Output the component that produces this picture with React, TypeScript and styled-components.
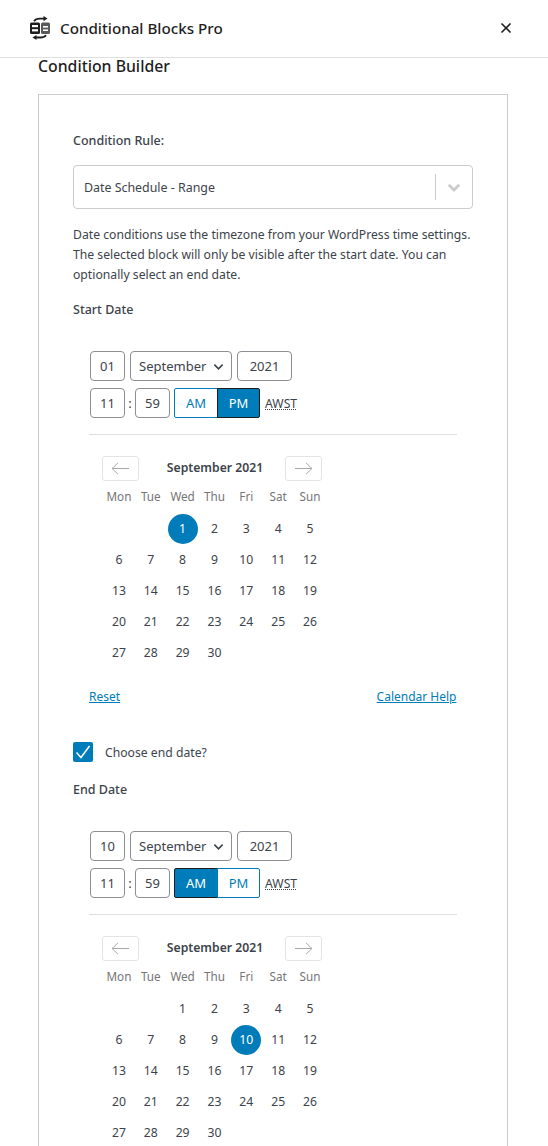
import React from "react";
import styled, { createGlobalStyle } from "styled-components";

const Global = createGlobalStyle`
  html, body { margin: 0; padding: 0; background: #fff; height: 1146px; overflow: hidden; }
  body { font-family: "Noto Sans", "Open Sans", sans-serif; font-size: 13px; color: #1e1e1e; }
  * { box-sizing: border-box; }
`;

const Page = styled.div`
  width: 548px;
  height: 1146px;
  overflow: hidden;
  display: flex;
  flex-direction: column;
`;
const Header = styled.header`
  height: 58px;
  flex: none;
  border-bottom: 1px solid #e0e0e0;
  display: flex;
  align-items: center;
  padding: 0 36px 2px 29px;
  gap: 9px;
`;
const HeaderTitle = styled.h1`
  margin: 0;
  flex: 1;
  font-size: 15.2px;
  line-height: 20px;
  font-weight: 500;
  color: #1e1e1e;
`;
const CloseButton = styled.button`
  border: 0;
  background: none;
  padding: 0;
  width: 12px;
  height: 12px;
  display: flex;
  color: #1e1e1e;
`;
const Body = styled.main`
  padding: 0 40px 0 38px;
`;
const SectionTitle = styled.h2`
  margin: 0;
  height: 36px;
  font-size: 15.8px;
  line-height: 16px;
  font-weight: 500;
  color: #1e1e1e;
`;
const Panel = styled.section`
  border: 1px solid #ccc;
  padding: 37px 34px 60px;
`;
const FieldLabel = styled.div`
  font-size: 12.5px;
  line-height: 18px;
  font-weight: 500;
  color: #3c434a;
`;
const RuleSelect = styled.div`
  margin-top: 15px;
  height: 44px;
  border: 1px solid #ccc;
  border-radius: 4px;
  display: flex;
  align-items: center;
  padding-left: 10px;
  font-size: 12.4px;
  color: #3c434a;
`;
const RuleValue = styled.span`
  flex: 1;
`;
const RuleSeparator = styled.span`
  width: 1px;
  height: 26px;
  background: #ccc;
`;
const RuleChevron = styled.span`
  width: 36px;
  display: flex;
  justify-content: center;
  color: #ccc;
`;
const Description = styled.p`
  margin: 16px 0 0;
  font-size: 12.2px;
  line-height: 20px;
  color: #3c434a;
  white-space: nowrap;
`;
const DateHeading = styled(FieldLabel)<{ $top: number }>`
  margin-top: ${(p) => p.$top}px;
`;
const Picker = styled.div`
  margin-top: 32px;
  padding-left: 17px;
  width: 385px;
`;
const TimeRow = styled.div`
  display: flex;
  align-items: center;
  gap: 5px;
  height: 30px;
  margin-bottom: 7px;
`;
const Input = styled.div<{ $w: number }>`
  width: ${(p) => p.$w}px;
  height: 30px;
  border: 1px solid #8c8f94;
  border-radius: 4px;
  display: flex;
  align-items: center;
  justify-content: center;
  font-size: 13px;
  color: #3c434a;
  flex: none;
`;
const MonthSelect = styled(Input)`
  justify-content: space-between;
  padding: 0 7px 0 8px;
`;
const Colon = styled.span`
  width: 5px;
  text-align: center;
  color: #3c434a;
  margin: 0 -2.5px;
`;
const Meridiem = styled.div`
  display: flex;
  height: 30px;
  flex: none;
  margin-left: -1px;
`;
const MeridiemButton = styled.div<{ $on: boolean; $side: "l" | "r" }>`
  width: ${(p) => (p.$side === "l" ? 44 : 43)}px;
  height: 30px;
  display: flex;
  align-items: center;
  justify-content: center;
  font-size: 13px;
  border: 1px solid ${(p) => (p.$on ? "#1e1e1e" : "#007cba")};
  background: ${(p) => (p.$on ? "#007cba" : "#fff")};
  color: ${(p) => (p.$on ? "#fff" : "#007cba")};
  border-radius: ${(p) => (p.$side === "l" ? "2px 0 0 2px" : "0 2px 2px 0")};
  ${(p) => (p.$side === "r" ? "margin-left: -1px;" : "")}
`;
const Zone = styled.abbr`
  font-size: 12.2px;
  color: #3c434a;
  text-decoration: underline dotted;
`;
const Divider = styled.hr`
  margin: 16px 0 0 -1px;
  border: 0;
  border-top: 1px solid #ddd;
  width: 368px;
  height: 1px;
`;
const Calendar = styled.div`
  margin-top: 21px;
  margin-left: 12px;
  width: 220px;
`;
const CalNav = styled.div`
  display: flex;
  align-items: center;
  justify-content: space-between;
  height: 25px;
`;
const NavButton = styled.div`
  width: 37px;
  height: 25px;
  border: 1px solid #e4e4e4;
  border-radius: 3px;
  display: flex;
  align-items: center;
  justify-content: center;
  color: #a8a8a8;
`;
const Month = styled.strong`
  font-size: 12.2px;
  font-weight: 600;
  color: #3c434a;
  padding: 0 0 3px 6px;
`;
const Grid = styled.div`
  display: grid;
  grid-template-columns: repeat(7, 31.85px);
  margin-left: 1px;
`;
const WeekGrid = styled(Grid)`
  margin-top: 6px;
  height: 18px;
  margin-bottom: 8px;
`;
const Week = styled.div`
  font-size: 11.7px;
  line-height: 18px;
  text-align: center;
  color: #757575;
`;
const Day = styled.div`
  height: 31px;
  display: flex;
  align-items: center;
  justify-content: center;
  font-size: 12.2px;
  color: #3c434a;
`;
const DayMark = styled.span<{ $on?: boolean }>`
  width: 30px;
  height: 30px;
  border-radius: 50%;
  display: flex;
  align-items: center;
  justify-content: center;
  background: ${(p) => (p.$on ? "#007cba" : "transparent")};
  color: ${(p) => (p.$on ? "#fff" : "inherit")};
`;
const Links = styled.div`
  margin-top: 20px;
  padding-left: 16px;
  display: flex;
  justify-content: space-between;
  width: 383.5px;
`;
const LinkText = styled.a`
  font-size: 12px;
  line-height: 18px;
  color: #007cba;
  text-decoration: underline;
`;
const CheckRow = styled.label`
  display: flex;
  align-items: center;
  gap: 12px;
  margin-top: 36px;
  height: 20px;
  font-size: 12.2px;
  color: #3c434a;
`;
const CheckBox = styled.span`
  width: 20px;
  height: 20px;
  background: #007cba;
  border-radius: 2px;
  display: flex;
  align-items: center;
  justify-content: center;
  flex: none;
`;

const Logo = () => (
  <svg width="22" height="24" viewBox="0 0 22 24" fill="none" style={{ flex: "none" }}>
    <path d="M5 5.2C6.5 3 8.5 2.6 10.5 2.6H15" stroke="#1e1e1e" strokeWidth="1.8" />
    <path d="M14.5 0l4 2.6-4 2.6z" fill="#1e1e1e" />
    <rect x="1" y="6.5" width="10" height="11.5" rx="1.5" fill="#1e1e1e" />
    <rect x="12" y="6.5" width="9" height="11.5" rx="1.5" fill="#5a5a5a" />
    <rect x="3" y="9" width="6" height="2.2" fill="#fff" />
    <rect x="3" y="13.2" width="6" height="2.2" fill="#fff" />
    <rect x="14" y="10" width="5" height="1.6" fill="#fff" />
    <rect x="14" y="13.4" width="5" height="1.6" fill="#fff" />
    <path d="M17 19.2C15.5 21.2 13.5 21.5 11.5 21.5H7" stroke="#1e1e1e" strokeWidth="1.8" />
    <path d="M7.5 18.9l-4 2.6 4 2.5z" fill="#1e1e1e" />
  </svg>
);

const Close = () => (
  <svg width="12" height="12" viewBox="0 0 12 12" fill="none">
    <path d="M1.5 1.5l9 9M10.5 1.5l-9 9" stroke="currentColor" strokeWidth="1.6" />
  </svg>
);

const Chevron = ({ size = 12, stroke = 2 }: { size?: number; stroke?: number }) => (
  <svg width={size} height={size} viewBox="0 0 12 12" fill="none">
    <path d="M1.5 4l4.5 4.5L10.5 4" stroke="currentColor" strokeWidth={stroke} />
  </svg>
);

const Arrow = ({ dir }: { dir: "l" | "r" }) => (
  <svg width="19" height="13" viewBox="0 0 19 13" fill="none">
    {dir === "l" ? (
      <path d="M18 6.5H1M7 .8L1 6.5l6 5.7" stroke="currentColor" />
    ) : (
      <path d="M1 6.5h17M12 .8l6 5.7-6 5.7" stroke="currentColor" />
    )}
  </svg>
);

const weekdays = ["Mon", "Tue", "Wed", "Thu", "Fri", "Sat", "Sun"];

const DatePicker = ({ day, selected, pm }: { day: string; selected: number; pm: boolean }) => (
  <Picker>
    <TimeRow>
      <Input $w={35}>{day}</Input>
      <MonthSelect $w={102}>
        September
        <Chevron size={11} stroke={1.8} />
      </MonthSelect>
      <Input $w={55}>2021</Input>
    </TimeRow>
    <TimeRow>
      <Input $w={35}>11</Input>
      <Colon>:</Colon>
      <Input $w={35}>59</Input>
      <Meridiem>
        <MeridiemButton $side="l" $on={!pm}>AM</MeridiemButton>
        <MeridiemButton $side="r" $on={pm}>PM</MeridiemButton>
      </Meridiem>
      <Zone title="Australian Western Standard Time">AWST</Zone>
    </TimeRow>
    <Divider />
    <Calendar>
      <CalNav>
        <NavButton><Arrow dir="l" /></NavButton>
        <Month>September 2021</Month>
        <NavButton><Arrow dir="r" /></NavButton>
      </CalNav>
      <WeekGrid>
        {weekdays.map((w) => <Week key={w}>{w}</Week>)}
      </WeekGrid>
      <Grid>
        <Day /><Day />
        {Array.from({ length: 30 }, (_, i) => i + 1).map((d) => (
          <Day key={d}>
            <DayMark $on={d === selected}>{d}</DayMark>
          </Day>
        ))}
      </Grid>
    </Calendar>
  </Picker>
);

export default function App() {
  return (
    <Page>
      <Global />
      <Header>
        <Logo />
        <HeaderTitle>Conditional Blocks Pro</HeaderTitle>
        <CloseButton aria-label="Close"><Close /></CloseButton>
      </Header>
      <Body>
        <SectionTitle>Condition Builder</SectionTitle>
        <Panel>
          <FieldLabel>Condition Rule:</FieldLabel>
          <RuleSelect>
            <RuleValue>Date Schedule - Range</RuleValue>
            <RuleSeparator />
            <RuleChevron><Chevron size={14} stroke={2.4} /></RuleChevron>
          </RuleSelect>
          <Description>
            Date conditions use the timezone from your WordPress time settings.
            <br />
            The selected block will only be visible after the start date. You can
            <br />
            optionally select an end date.
          </Description>
          <DateHeading $top={16}>Start Date</DateHeading>
          <DatePicker day="01" selected={1} pm />
          <Links>
            <LinkText>Reset</LinkText>
            <LinkText>Calendar Help</LinkText>
          </Links>
          <CheckRow>
            <CheckBox>
              <svg width="16" height="16" viewBox="0 0 16 16" fill="none">
                <path d="M1.5 8.5L6 13.5 14.5 2" stroke="#fff" strokeWidth="1.5" />
              </svg>
            </CheckBox>
            Choose end date?
          </CheckRow>
          <DateHeading $top={19}>End Date</DateHeading>
          <DatePicker day="10" selected={10} pm={false} />
        </Panel>
      </Body>
    </Page>
  );
}
